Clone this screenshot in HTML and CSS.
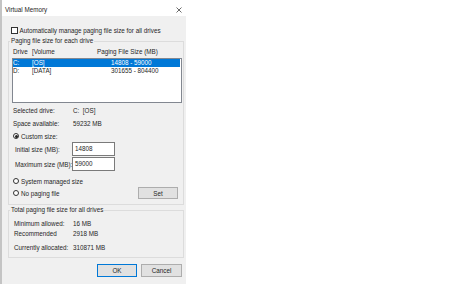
FILE: index.html
```html
<!DOCTYPE html>
<html lang="en">
<head>
<meta charset="utf-8">
<title>Virtual Memory</title>
<link rel="stylesheet" href="styles.css">
</head>
<body>
<div class="window">
  <div class="titlebar">
    <span class="title">Virtual Memory</span>
    <svg class="close" width="6" height="6" viewBox="0 0 6 6"><path d="M0.5 0.5L5.5 5.5M5.5 0.5L0.5 5.5" stroke="#444" stroke-width="0.8" fill="none"/></svg>
  </div>
  <div class="content">
    <div class="check-row"><span class="checkbox"></span><span>Automatically manage paging file size for all drives</span></div>

    <fieldset class="group group-drives">
      <legend>Paging file size for each drive</legend>
      <div class="list-header">
        <span class="col-drive">Drive</span><span class="col-vol">[Volume</span><span class="col-size">Paging File Size (MB)</span>
      </div>
      <div class="listbox">
        <div class="list-row selected"><span class="col-drive">C:</span><span class="col-vol">[OS]</span><span class="col-size">14808 - 59000</span></div>
        <div class="list-row"><span class="col-drive">D:</span><span class="col-vol">[DATA]</span><span class="col-size">301655 - 804400</span></div>
      </div>
      <div class="info-row"><span class="info-label">Selected drive:</span><span>C:&nbsp; [OS]</span></div>
      <div class="info-row"><span class="info-label">Space available:</span><span>59232 MB</span></div>
      <div class="radio-row custom"><span class="radio checked"></span><span>Custom size:</span></div>
      <div class="size-row first"><span class="size-label">Initial size (MB):</span><span class="input">14808</span></div>
      <div class="size-row"><span class="size-label">Maximum size (MB):</span><span class="input">59000</span></div>
      <div class="radio-row system"><span class="radio"></span><span>System managed size</span></div>
      <div class="nopaging-row">
        <div class="radio-inline"><span class="radio"></span><span>No paging file</span></div>
        <span class="button set">Set</span>
      </div>
    </fieldset>

    <fieldset class="group group-total">
      <legend>Total paging file size for all drives</legend>
      <div class="total-row min"><span class="total-label">Minimum allowed:</span><span>16 MB</span></div>
      <div class="total-row rec"><span class="total-label">Recommended</span><span>2918 MB</span></div>
      <div class="total-row cur"><span class="total-label">Currently allocated:</span><span>310871 MB</span></div>
    </fieldset>

    <div class="button-row">
      <span class="button ok">OK</span>
      <span class="button cancel">Cancel</span>
    </div>
  </div>
</div>
</body>
</html>
```

FILE: styles.css
```css
* { box-sizing: border-box; }

body {
  margin: 0;
  background: #ffffff;
  font-family: "Liberation Sans", Arial, sans-serif;
  font-size: 6.3px;
  color: #262626;
  white-space: nowrap;
}

.window {
  width: 186px;
  height: 284px;
  border-left: 2px solid #c4c4c4;
  background: #f0f0f0;
  display: flex;
  flex-direction: column;
}

.titlebar {
  height: 16px;
  background: #ffffff;
  display: flex;
  align-items: flex-start;
  justify-content: space-between;
  padding: 6px 4px 0 3px;
  line-height: 8px;
}

.close { margin-top: 1px; }

.content {
  flex: 1;
  display: flex;
  flex-direction: column;
  padding: 0 2px 0 6px;
}

.check-row {
  display: flex;
  align-items: center;
  gap: 1.5px;
  margin: 11px 0 0 3px;
  height: 7px;
  line-height: 7px;
}

.checkbox {
  width: 7px;
  height: 7px;
  border: 1px solid #333;
  background: #fff;
  flex: none;
}

.group {
  margin: 0;
  border: 1px solid #dcdcdc;
  padding: 0 0 0 3px;
  width: 176px;
  min-width: 0;
}

.group legend {
  padding: 0 1px;
  margin-left: -2px;
  line-height: 8px;
}

.group-drives {
  margin-top: 3px;
  padding-bottom: 5px;
}

.list-header {
  display: flex;
  height: 8px;
  line-height: 8px;
  margin-top: 3px;
  padding-left: 1px;
}

.col-drive { width: 19px; flex: none; }
.col-vol { width: 65px; flex: none; }
.col-size { flex: none; }

.listbox {
  margin-top: 2px;
  width: 170px;
  height: 45px;
  border: 1px solid #828790;
  background: #fff;
}

.list-row {
  display: flex;
  height: 8px;
  line-height: 8px;
}

.list-row .col-vol { width: 79px; }

.list-row.selected {
  background: #0078d7;
  color: #fff;
  margin-right: 1px;
}

.info-row {
  display: flex;
  height: 13px;
  align-items: center;
  padding-left: 1px;
}
.listbox + .info-row { margin-top: 1px; }

.info-label { width: 60px; flex: none; }

.radio-row {
  display: flex;
  align-items: center;
  gap: 2px;
  height: 12px;
  padding-left: 1px;
}

.radio-row.system { margin-top: 4px; }

.radio {
  width: 6px;
  height: 6px;
  border: 1px solid #333;
  border-radius: 50%;
  background: #fff;
  flex: none;
  display: flex;
  align-items: center;
  justify-content: center;
}

.radio.checked::after {
  content: "";
  width: 3px;
  height: 3px;
  border-radius: 50%;
  background: #222;
}

.size-row {
  display: flex;
  align-items: center;
  height: 14px;
  padding-left: 3px;
}
.size-row + .size-row { margin-top: 1px; }

.size-label { width: 57px; flex: none; }

.input {
  width: 43px;
  height: 14px;
  border: 1px solid #7a7a7a;
  background: #fff;
  padding: 2px 0 0 2px;
  line-height: 8px;
}

.nopaging-row {
  display: flex;
  align-items: center;
  justify-content: space-between;
  height: 12px;
  padding-left: 1px;
  padding-right: 5px;
}

.radio-inline {
  display: flex;
  align-items: center;
  gap: 2px;
}

.button {
  display: flex;
  align-items: center;
  justify-content: center;
  background: #e1e1e1;
  border: 1px solid #adadad;
}

.button.set { width: 40px; height: 12px; }

.group-total {
  margin-top: 1px;
  padding-bottom: 5px;
}

.total-row {
  display: flex;
  align-items: center;
  height: 10px;
  padding-left: 2px;
}
.total-row.min { margin-top: 4px; }
.total-row.cur { margin-top: 4px; }

.total-label { width: 59px; flex: none; }

.button-row {
  display: flex;
  justify-content: flex-end;
  gap: 4px;
  margin-top: 6px;
  padding-right: 2px;
}

.button.ok {
  width: 40px;
  height: 13px;
  border-color: #0078d7;
}

.button.cancel {
  width: 41px;
  height: 13px;
}
```
